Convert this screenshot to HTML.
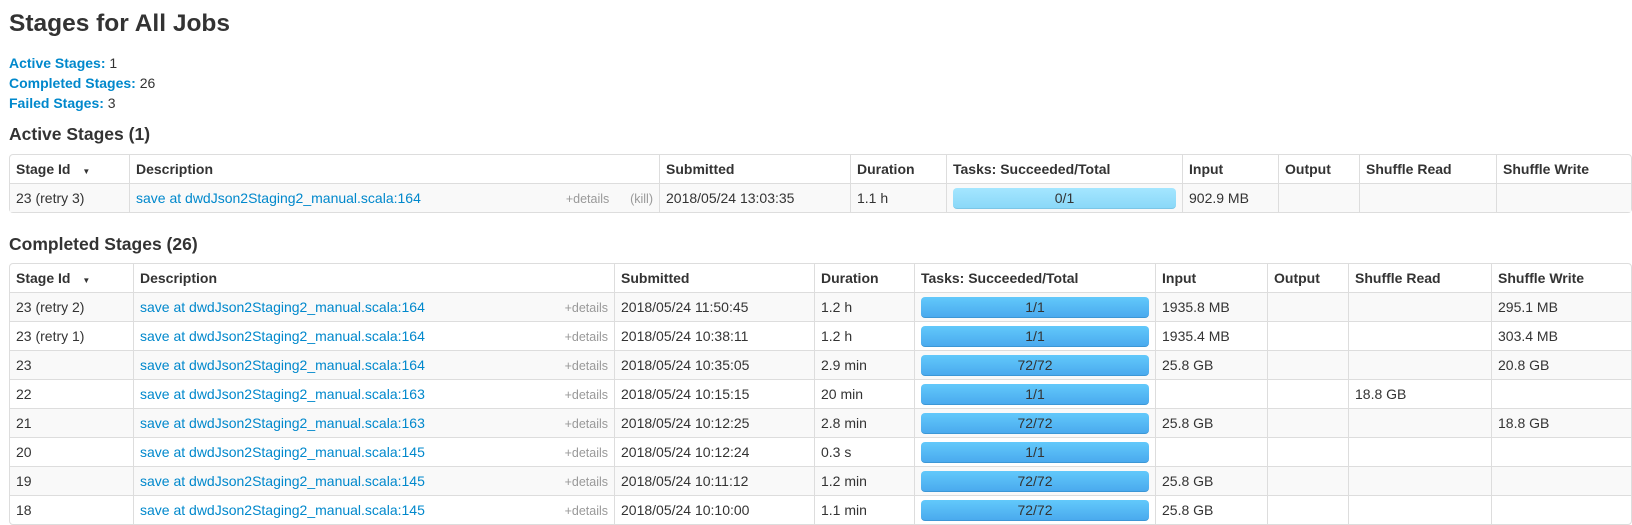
<!DOCTYPE html><html><head><style>
body{margin:0;background:#fff;font-family:"Liberation Sans",Arial,sans-serif;font-size:14px;color:#333;}
h3{position:absolute;left:9px;top:9px;margin:0;font-size:24.5px;font-weight:bold;line-height:30px;}
h4{position:absolute;left:9px;margin:0;font-size:17.5px;font-weight:bold;line-height:20px;}
.lk{position:absolute;left:9px;font-size:14px;line-height:18px;}
.lk b{color:#0088cc;}
a{color:#0088cc;text-decoration:none;}
table{position:absolute;left:9px;width:1623px;table-layout:fixed;border-collapse:separate;border-spacing:0;border:1px solid #ddd;border-radius:4px;}
td,th{border-left:1px solid #ddd;border-top:1px solid #ddd;padding:0 6px;height:28px;text-align:left;white-space:nowrap;overflow:hidden;font-size:14px;}
th{border-top:0;font-weight:bold;}
tr td:first-child,tr th:first-child{border-left:0;}
tr.o td{background:#f9f9f9;}
.det{float:right;color:#999;font-size:12.5px;position:relative;top:2px;}
.bar{height:21px;border-radius:4px;background:linear-gradient(#62c9fb,#4aaaee);border-bottom:1px solid #3c97d6;text-align:center;line-height:20px;box-sizing:border-box;color:#333;}
.bar.a{background:linear-gradient(#a4e6ff,#8ad8f8);border-bottom-color:#7cc6e6;}
.arr{font-size:8px;margin-left:8px;}
</style></head><body>
<h3>Stages for All Jobs</h3>
<div class="lk" style="top:54px"><b>Active Stages:</b> 1</div>
<div class="lk" style="top:74px"><b>Completed Stages:</b> 26</div>
<div class="lk" style="top:94px"><b>Failed Stages:</b> 3</div>
<h4 style="top:124px">Active Stages (1)</h4>
<table style="top:154px">
<colgroup><col style="width:119px"><col style="width:530px"><col style="width:191px"><col style="width:96px"><col style="width:236px"><col style="width:96px"><col style="width:81px"><col style="width:137px"><col></colgroup>
<tr><th>Stage Id <span class="arr">▼</span></th><th>Description</th><th>Submitted</th><th>Duration</th><th>Tasks: Succeeded/Total</th><th>Input</th><th>Output</th><th>Shuffle Read</th><th>Shuffle Write</th></tr>
<tr class="o"><td>23 (retry 3)</td><td><a>save at dwdJson2Staging2_manual.scala:164</a><span class="det">+details &nbsp; &nbsp; &nbsp;(kill)</span></td><td>2018/05/24 13:03:35</td><td>1.1 h</td><td><div class="bar a">0/1</div></td><td>902.9 MB</td><td></td><td></td><td></td></tr>
</table>
<h4 style="top:234px">Completed Stages (26)</h4>
<table style="top:263px">
<colgroup><col style="width:123px"><col style="width:481px"><col style="width:200px"><col style="width:100px"><col style="width:241px"><col style="width:112px"><col style="width:81px"><col style="width:143px"><col></colgroup>
<tr><th>Stage Id <span class="arr">▼</span></th><th>Description</th><th>Submitted</th><th>Duration</th><th>Tasks: Succeeded/Total</th><th>Input</th><th>Output</th><th>Shuffle Read</th><th>Shuffle Write</th></tr>
<tr class="o"><td>23 (retry 2)</td><td><a>save at dwdJson2Staging2_manual.scala:164</a><span class="det">+details</span></td><td>2018/05/24 11:50:45</td><td>1.2 h</td><td><div class="bar">1/1</div></td><td>1935.8 MB</td><td></td><td></td><td>295.1 MB</td></tr>
<tr><td>23 (retry 1)</td><td><a>save at dwdJson2Staging2_manual.scala:164</a><span class="det">+details</span></td><td>2018/05/24 10:38:11</td><td>1.2 h</td><td><div class="bar">1/1</div></td><td>1935.4 MB</td><td></td><td></td><td>303.4 MB</td></tr>
<tr class="o"><td>23</td><td><a>save at dwdJson2Staging2_manual.scala:164</a><span class="det">+details</span></td><td>2018/05/24 10:35:05</td><td>2.9 min</td><td><div class="bar">72/72</div></td><td>25.8 GB</td><td></td><td></td><td>20.8 GB</td></tr>
<tr><td>22</td><td><a>save at dwdJson2Staging2_manual.scala:163</a><span class="det">+details</span></td><td>2018/05/24 10:15:15</td><td>20 min</td><td><div class="bar">1/1</div></td><td></td><td></td><td>18.8 GB</td><td></td></tr>
<tr class="o"><td>21</td><td><a>save at dwdJson2Staging2_manual.scala:163</a><span class="det">+details</span></td><td>2018/05/24 10:12:25</td><td>2.8 min</td><td><div class="bar">72/72</div></td><td>25.8 GB</td><td></td><td></td><td>18.8 GB</td></tr>
<tr><td>20</td><td><a>save at dwdJson2Staging2_manual.scala:145</a><span class="det">+details</span></td><td>2018/05/24 10:12:24</td><td>0.3 s</td><td><div class="bar">1/1</div></td><td></td><td></td><td></td><td></td></tr>
<tr class="o"><td>19</td><td><a>save at dwdJson2Staging2_manual.scala:145</a><span class="det">+details</span></td><td>2018/05/24 10:11:12</td><td>1.2 min</td><td><div class="bar">72/72</div></td><td>25.8 GB</td><td></td><td></td><td></td></tr>
<tr><td>18</td><td><a>save at dwdJson2Staging2_manual.scala:145</a><span class="det">+details</span></td><td>2018/05/24 10:10:00</td><td>1.1 min</td><td><div class="bar">72/72</div></td><td>25.8 GB</td><td></td><td></td><td></td></tr>
</table>
</body></html>
